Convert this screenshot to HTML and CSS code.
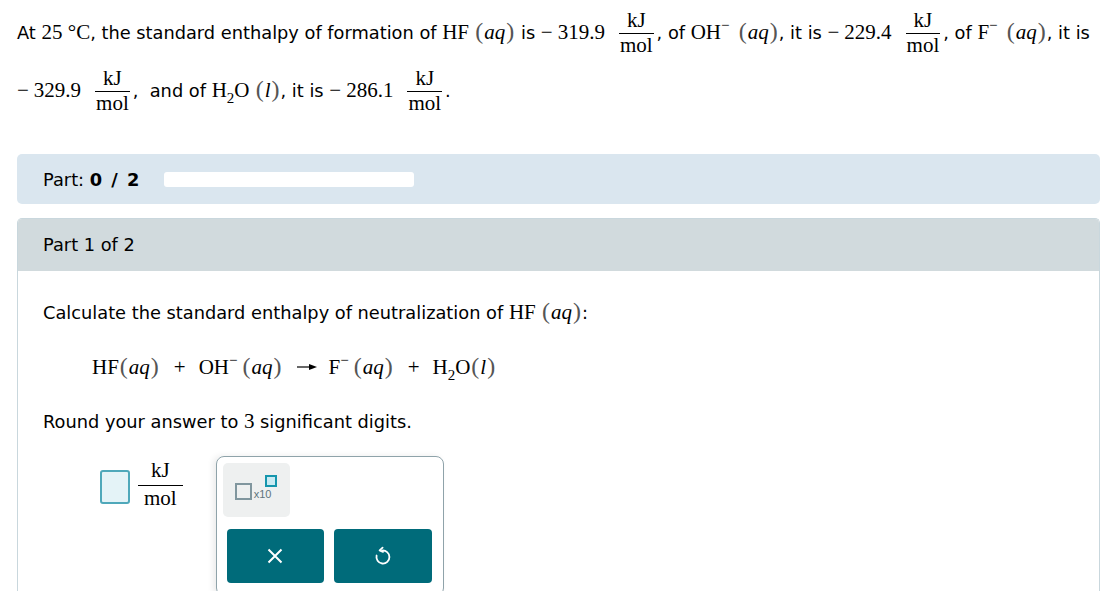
FILE: index.html
```html
<!DOCTYPE html>
<html>
<head>
    <title>Enthalpy of neutralization</title>
    <link rel="stylesheet" href="styles.css">
</head>
<body>
    <div class="page">
        <div class="intro">
            <div class="line">At <span class="m">25 °C</span>, the standard enthalpy of formation of <span class="m">HF <span class="paren">(</span><i>aq</i><span class="paren">)</span></span> is <span class="m"><span class="neg">−</span>319.9</span><span class="frac"><span class="num">kJ</span><span class="den">mol</span></span>, of <span class="m">OH<sup>−</sup> <span class="paren">(</span><i>aq</i><span class="paren">)</span></span>, it is <span class="m"><span class="neg">−</span>229.4</span><span class="frac"><span class="num">kJ</span><span class="den">mol</span></span>, of <span class="m">F<sup>−</sup> <span class="paren">(</span><i>aq</i><span class="paren">)</span></span>, it is</div>
            <div class="line"><span class="m"><span class="neg">−</span>329.9</span><span class="frac"><span class="num">kJ</span><span class="den">mol</span></span>, &nbsp;and of <span class="m">H<sub>2</sub>O <span class="paren">(</span><i>l</i><span class="paren">)</span></span>, it is <span class="m"><span class="neg">−</span>286.1</span><span class="frac"><span class="num">kJ</span><span class="den">mol</span></span>.</div>
        </div>

        <div class="progress-bar">
            <span>Part: <b>0 / 2</b></span>
            <div class="progress-track"></div>
        </div>

        <div class="part-card">
            <div class="part-header">Part 1 of 2</div>
            <div class="part-body">
                <div class="prompt">Calculate the standard enthalpy of neutralization of <span class="m">HF <span class="paren">(</span><i>aq</i><span class="paren">)</span></span>:</div>
                <div class="equation m">HF<span class="paren">(</span><i>aq</i><span class="paren">)</span><span class="op">+</span>OH<sup>−</sup><span class="paren">(</span><i>aq</i><span class="paren">)</span><svg class="arrow" width="20" height="8" viewBox="0 0 20 8"><path d="M0 4H14" stroke="#000" stroke-width="1.2"/><path d="M12 1L20 4 12 7Z" fill="#000"/></svg>F<sup>−</sup><span class="paren">(</span><i>aq</i><span class="paren">)</span><span class="op">+</span>H<sub>2</sub>O<span class="paren">(</span><i>l</i><span class="paren">)</span></div>
                <div class="prompt">Round your answer to <span class="m">3</span> significant digits.</div>

                <div class="answer-row">
                    <div class="answer-input"></div>
                    <span class="frac big"><span class="num">kJ</span><span class="den">mol</span></span>
                    <div class="tool-panel">
                        <div class="sci-btn">
                            <span class="sci-base"></span><span class="sci-x">x10</span><span class="sci-exp"></span>
                        </div>
                        <div class="tool-actions">
                            <button class="tool-btn">
                                <svg width="18" height="18" viewBox="0 0 18 18"><path d="M2.5 2.5L15.5 15.5M15.5 2.5L2.5 15.5" stroke="#fff" stroke-width="2" fill="none"/></svg>
                            </button>
                            <button class="tool-btn">
                                <svg width="18" height="20" viewBox="0 0 18 20"><path d="M8 4.6A6.5 6.5 0 1 1 2.6 9.5" stroke="#fff" stroke-width="1.8" fill="none" stroke-linecap="round"/><path d="M8.6 1.6L5.6 4.4 9 5.9" stroke="#fff" stroke-width="1.8" fill="none" stroke-linecap="round" stroke-linejoin="round"/></svg>
                            </button>
                        </div>
                    </div>
                </div>
            </div>
        </div>
    </div>
</body>
</html>
```

FILE: styles.css
```css
body {
    margin: 0;
    background-color: #fff;
    color: #000;
    font-family: "DejaVu Sans", Verdana, sans-serif;
    font-size: 17.8px;
    overflow: hidden;
}

.page {
    width: 1083px;
    padding-left: 17px;
}

.intro {
    padding-top: 2px;
}

.line {
    height: 58px;
    line-height: 58px;
    white-space: nowrap;
}

.m {
    font-family: "Liberation Serif", "Times New Roman", serif;
    font-size: 21px;
}

.m i {
    font-style: italic;
}

.neg {
    margin-right: 5px;
}

.paren {
    color: #555;
    font-size: 24px;
    margin: 0 1px;
}

sup {
    font-size: 15px;
    vertical-align: 9px;
    line-height: 0;
    margin-right: 3px;
}

sub {
    font-size: 15px;
    vertical-align: -6px;
    line-height: 0;
}

.frac {
    display: inline-flex;
    flex-direction: column;
    vertical-align: 12px;
    text-align: center;
    font-family: "Liberation Serif", "Times New Roman", serif;
    font-size: 21px;
    line-height: 23px;
    margin: 0 3px 0 14px;
}

.num {
    padding: 0 1px 1px;
}

.den {
    border-top: 1px solid #000;
    padding: 0 1px;
}

.progress-bar {
    margin-top: 36px;
    height: 50px;
    background-color: #dae6ef;
    border-radius: 5px;
    display: flex;
    align-items: center;
    padding-left: 26px;
    gap: 24px;
}

.progress-bar b {
    word-spacing: 2px;
    letter-spacing: 0.5px;
}

.progress-track {
    width: 250px;
    height: 15px;
    background-color: #fff;
    border-radius: 3px;
}

.part-card {
    margin-top: 14px;
    border: 1px solid #c9d7dd;
    border-bottom: none;
    border-radius: 5px 5px 0 0;
    height: 400px;
}

.part-header {
    height: 52px;
    line-height: 52px;
    background-color: #d1dadd;
    padding-left: 25px;
    border-radius: 4px 4px 0 0;
}

.part-body {
    padding: 26px 0 0 25px;
}

.prompt {
    height: 28px;
    line-height: 28px;
}

.equation {
    margin: 27px 0 27px 49px;
    height: 28px;
    line-height: 28px;
}

.equation sup {
    margin-right: 4px;
}

.op {
    margin: 0 13px 0 14px;
}

.arrow {
    margin: 0 12px 0 14px;
    vertical-align: 3px;
}

.answer-row {
    display: flex;
    align-items: flex-start;
    margin-top: 21px;
    margin-left: 57px;
}

.answer-input {
    width: 26px;
    height: 30px;
    margin-top: 14px;
    border: 2px solid #4fa8ba;
    border-radius: 3px;
    background-color: #e4f3f7;
}

.frac.big {
    margin: 2px 0 0 8px;
    line-height: 25px;
}

.frac.big .num {
    padding: 0 6px 2px;
}

.frac.big .den {
    padding: 0 6px;
}

.tool-panel {
    margin-left: 33px;
    width: 228px;
    height: 140px;
    border: 1px solid #8fa3aa;
    border-radius: 8px;
    box-shadow: -3px 0 6px rgba(0, 0, 0, 0.08);
    padding: 6px 0 0 6px;
    box-sizing: border-box;
}

.sci-btn {
    width: 67px;
    height: 54px;
    background-color: #eef0f0;
    border-radius: 5px;
    position: relative;
}

.sci-base {
    position: absolute;
    left: 12px;
    top: 20px;
    width: 13px;
    height: 13px;
    border: 2px solid #80969e;
}

.sci-x {
    position: absolute;
    left: 31px;
    top: 25px;
    font-family: "Liberation Sans", Arial, sans-serif;
    font-size: 11px;
    color: #5f747c;
}

.sci-exp {
    position: absolute;
    left: 42px;
    top: 12px;
    width: 8px;
    height: 8px;
    border: 2px solid #1596ad;
    background-color: #c9ebf3;
}

.tool-actions {
    display: flex;
    gap: 10px;
    margin: 12px 0 0 4px;
}

.tool-btn {
    width: 97px;
    height: 54px;
    border: none;
    border-radius: 4px;
    background-color: #006b7a;
    display: flex;
    align-items: center;
    justify-content: center;
    padding: 0;
}

.tool-btn + .tool-btn {
    width: 98px;
}
```
